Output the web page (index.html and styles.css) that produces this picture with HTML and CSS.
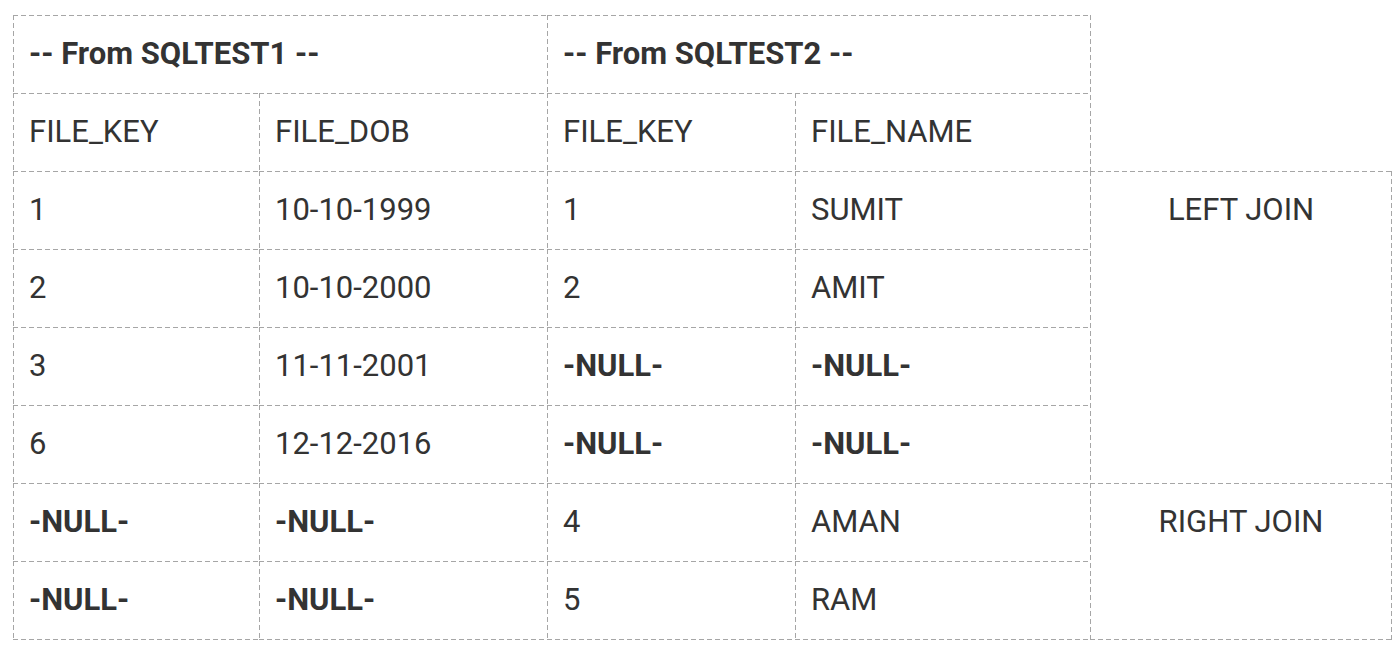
FILE: index.html
```html
<!DOCTYPE html>
<html>
<head>
<meta charset="utf-8">
<link rel="stylesheet" href="styles.css">
</head>
<body>
<table class="grid">
  <colgroup>
    <col class="c1"><col class="c2"><col class="c3"><col class="c4"><col class="c5">
  </colgroup>
  <tr>
    <th colspan="2">-- From SQLTEST1 --</th>
    <th colspan="2">-- From SQLTEST2 --</th>
    <td class="blank" rowspan="2"></td>
  </tr>
  <tr>
    <td>FILE_KEY</td><td>FILE_DOB</td><td>FILE_KEY</td><td>FILE_NAME</td>
  </tr>
  <tr>
    <td>1</td><td>10-10-1999</td><td>1</td><td>SUMIT</td>
    <td class="join" rowspan="4">LEFT JOIN</td>
  </tr>
  <tr>
    <td>2</td><td>10-10-2000</td><td>2</td><td>AMIT</td>
  </tr>
  <tr>
    <td>3</td><td>11-11-2001</td><td class="null">-NULL-</td><td class="null">-NULL-</td>
  </tr>
  <tr>
    <td>6</td><td>12-12-2016</td><td class="null">-NULL-</td><td class="null">-NULL-</td>
  </tr>
  <tr>
    <td class="null">-NULL-</td><td class="null">-NULL-</td><td>4</td><td>AMAN</td>
    <td class="join join-last" rowspan="2">RIGHT JOIN</td>
  </tr>
  <tr class="last">
    <td class="null">-NULL-</td><td class="null">-NULL-</td><td>5</td><td>RAM</td>
  </tr>
</table>
</body>
</html>
```
FILE: styles.css
```css
html, body {
  background: #ffffff;
}
body {
  margin: 15px 0 0 13px;
  font-family: Roboto, "Noto Sans", sans-serif;
  color: #333333;
  --dash: #a6a6a6;
  --line-h: linear-gradient(to right, var(--dash) 0 5px, transparent 5px 8px);
  --line-v: linear-gradient(to bottom, var(--dash) 0 5px, transparent 5px 8px);
}
.grid {
  border-collapse: separate;
  border-spacing: 0;
  table-layout: fixed;
  width: 1379px;
}
.c1 { width: 246px; }
.c2 { width: 288px; }
.c3 { width: 248px; }
.c4 { width: 295px; }
.c5 { width: 302px; }
.grid th,
.grid td {
  border: none;
  padding: 16px 16px 17px 16px;
  height: 45px;
  line-height: 45px;
  font-size: 31px;
  font-weight: 400;
  text-align: left;
  vertical-align: top;
  white-space: nowrap;
  box-sizing: content-box;
  background-image: var(--line-h), var(--line-v);
  background-size: 8px 1px, 1px 8px;
  background-repeat: repeat-x, repeat-y;
  background-position: left top, left top;
}
.grid th,
.grid td.null {
  font-weight: 700;
}
.grid td.blank {
  background-image: var(--line-v);
  background-size: 1px 8px;
  background-repeat: repeat-y;
  background-position: left top;
}
.grid td.join {
  text-align: center;
  background-image: var(--line-h), var(--line-v), var(--line-v);
  background-size: 8px 1px, 1px 8px, 1px 8px;
  background-repeat: repeat-x, repeat-y, repeat-y;
  background-position: left top, left top, right top;
}
.grid td.join-last {
  background-image: var(--line-h), var(--line-v), var(--line-v), var(--line-h);
  background-size: 8px 1px, 1px 8px, 1px 8px, 8px 1px;
  background-repeat: repeat-x, repeat-y, repeat-y, repeat-x;
  background-position: left top, left top, right top, left bottom;
}
.grid tr.last td {
  padding-bottom: 18px;
  background-image: var(--line-h), var(--line-v), var(--line-h);
  background-size: 8px 1px, 1px 8px, 8px 1px;
  background-repeat: repeat-x, repeat-y, repeat-x;
  background-position: left top, left top, left bottom;
}
```
